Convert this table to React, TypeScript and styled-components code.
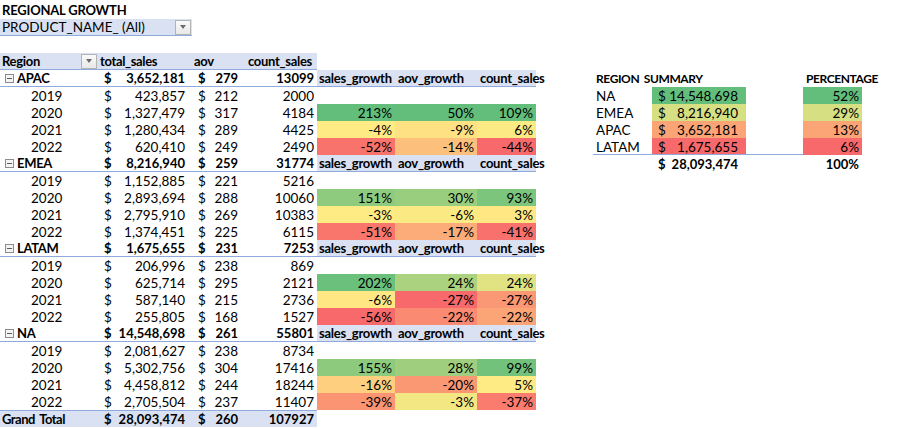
import React from "react";
import styled, { createGlobalStyle, css } from "styled-components";

const GlobalStyle = createGlobalStyle`
  html, body {
    margin: 0;
    padding: 0;
    background: #ffffff;
  }
  body {
    font-family: Lato, "Liberation Sans", sans-serif;
    font-size: 13.5px;
    color: #000000;
  }
`;

const BLUE_BG = "#D9E1F2";
const BLUE_LINE = "#8EA9DB";
const ROW = 17;

type Year = [number, string, number, number];
type Region = {
  name: string;
  total: string;
  aov: number;
  count: number;
  years: Year[];
  growth: number[][];
};

const regions: Region[] = [
  {
    name: "APAC",
    total: "3,652,181",
    aov: 279,
    count: 13099,
    years: [
      [2019, "423,857", 212, 2000],
      [2020, "1,327,479", 317, 4184],
      [2021, "1,280,434", 289, 4425],
      [2022, "620,410", 249, 2490],
    ],
    growth: [
      [213, 50, 109],
      [-4, -9, 6],
      [-52, -14, -44],
    ],
  },
  {
    name: "EMEA",
    total: "8,216,940",
    aov: 259,
    count: 31774,
    years: [
      [2019, "1,152,885", 221, 5216],
      [2020, "2,893,694", 288, 10060],
      [2021, "2,795,910", 269, 10383],
      [2022, "1,374,451", 225, 6115],
    ],
    growth: [
      [151, 30, 93],
      [-3, -6, 3],
      [-51, -17, -41],
    ],
  },
  {
    name: "LATAM",
    total: "1,675,655",
    aov: 231,
    count: 7253,
    years: [
      [2019, "206,996", 238, 869],
      [2020, "625,714", 295, 2121],
      [2021, "587,140", 215, 2736],
      [2022, "255,805", 168, 1527],
    ],
    growth: [
      [202, 24, 24],
      [-6, -27, -27],
      [-56, -22, -22],
    ],
  },
  {
    name: "NA",
    total: "14,548,698",
    aov: 261,
    count: 55801,
    years: [
      [2019, "2,081,627", 238, 8734],
      [2020, "5,302,756", 304, 17416],
      [2021, "4,458,812", 244, 18244],
      [2022, "2,705,504", 237, 11407],
    ],
    growth: [
      [155, 28, 99],
      [-16, -20, 5],
      [-39, -3, -37],
    ],
  },
];

const summary = [
  { name: "NA", value: "14,548,698", raw: 14548698, pct: "52%" },
  { name: "EMEA", value: "8,216,940", raw: 8216940, pct: "29%" },
  { name: "APAC", value: "3,652,181", raw: 3652181, pct: "13%" },
  { name: "LATAM", value: "1,675,655", raw: 1675655, pct: "6%" },
];

// excel style 3 colour scale: red -> yellow (median) -> green
const RED = [248, 105, 107];
const YELLOW = [255, 235, 132];
const GREEN = [99, 190, 123];

const median = (list: number[]) => {
  const s = [...list].sort((a, b) => a - b);
  const p = (s.length - 1) * 0.5;
  const lo = Math.floor(p);
  const hi = Math.ceil(p);
  return s[lo] + (s[hi] - s[lo]) * (p - lo);
};

const mix = (a: number[], b: number[], t: number) =>
  `rgb(${a.map((v, i) => Math.round(v + (b[i] - v) * t)).join(",")})`;

const scaleColor = (value: number, list: number[]) => {
  const min = Math.min(...list);
  const max = Math.max(...list);
  const mid = median(list);
  if (value <= mid) {
    return mix(RED, YELLOW, mid === min ? 1 : (value - min) / (mid - min));
  }
  return mix(YELLOW, GREEN, (value - mid) / (max - mid));
};

const growthColumns = [0, 1, 2].map((c) =>
  regions.flatMap((r) => r.growth.map((g) => g[c]))
);
const summaryValues = summary.map((s) => s.raw);

const Page = styled.div`
  display: flex;
  align-items: flex-start;
  padding-top: 2px;
  width: 903px;
  height: 428px;
  overflow: hidden;
`;

const Left = styled.div`
  display: flex;
  flex-direction: column;
  width: 536px;
`;

const Title = styled.div`
  height: ${ROW}px;
  line-height: ${ROW}px;
  padding-left: 2px;
  font-size: 13px;
  font-weight: 700;
  letter-spacing: -0.2px;
`;

const FilterBar = styled.div`
  display: flex;
  align-items: center;
  justify-content: space-between;
  width: 192px;
  height: ${ROW}px;
  box-sizing: border-box;
  padding: 0 1px 0 2px;
  background: ${BLUE_BG};
  border-bottom: 1px solid ${BLUE_LINE};
`;

const Spacer = styled.div`
  height: ${ROW}px;
`;

const DropButton = styled.span`
  display: flex;
  align-items: center;
  justify-content: center;
  width: 16px;
  height: 15px;
  box-sizing: border-box;
  border: 1px solid #b4b4b4;
  background: linear-gradient(#fafafa, #e8e8e8);

  &::after {
    content: "";
    border-left: 3.5px solid transparent;
    border-right: 3.5px solid transparent;
    border-top: 4px solid #6b6b6b;
  }
`;

const Row = styled.div`
  display: grid;
  grid-template-columns: 98px 94px 53px 72px 78px 82px 59px;
  height: ${ROW}px;
`;

const Cell = styled.div<{
  $bg?: string;
  $right?: boolean;
  $bold?: boolean;
  $size?: number;
  $squeeze?: number;
  $top?: boolean;
  $bottom?: boolean;
  $indent?: number;
}>`
  display: flex;
  align-items: center;
  justify-content: ${(p) => (p.$right ? "flex-end" : "flex-start")};
  box-sizing: border-box;
  height: ${ROW}px;
  padding: 0 3px 0 ${(p) => p.$indent ?? 2}px;
  white-space: nowrap;
  background: ${(p) => p.$bg ?? "transparent"};
  font-size: ${(p) => p.$size ?? (p.$bold ? 13 : 13.5)}px;
  font-weight: ${(p) => (p.$bold ? 700 : 400)};
  letter-spacing: ${(p) => (p.$squeeze ? -p.$squeeze : 0)}px;
  word-spacing: ${(p) => (p.$squeeze ? 2 : 0)}px;
  ${(p) =>
    p.$top &&
    css`
      border-top: 1px solid ${BLUE_LINE};
    `}
  ${(p) =>
    p.$bottom &&
    css`
      border-bottom: 1px solid ${BLUE_LINE};
    `}
`;

const HeadCell = styled(Cell)`
  justify-content: space-between;
  padding-right: 1px;
`;

const Money = styled(Cell)`
  justify-content: space-between;
  padding: 0 7px 0 6px;
`;

const Collapse = styled.span`
  position: relative;
  display: inline-block;
  width: 9px;
  height: 9px;
  box-sizing: border-box;
  margin: 0 3px 0 2px;
  border: 1px solid #8c8c8c;
  background: #f4f4f4;

  &::after {
    content: "";
    position: absolute;
    left: 1px;
    right: 1px;
    top: 3px;
    height: 1px;
    background: #5a5a5a;
  }
`;

const Summary = styled.div`
  display: grid;
  grid-template-columns: 59px 94px 57px 59px;
  grid-auto-rows: ${ROW}px;
  margin: ${ROW * 4}px 0 0 57px;
`;

const SumCell = styled(Cell)<{ $line?: boolean }>`
  padding-left: 3px;
  ${(p) =>
    p.$line &&
    css`
      box-shadow: inset 0 -1px 0 ${BLUE_LINE};
    `}
`;

const SumMoney = styled(Money)<{ $line?: boolean }>`
  padding: 0 8px 0 6px;
  ${(p) =>
    p.$line &&
    css`
      box-shadow: inset 0 -1px 0 ${BLUE_LINE};
    `}
`;

const Amount = ({ value }: { value: string }) => (
  <Money>
    <span>$</span>
    <span>{value}</span>
  </Money>
);

const App = () => {
  return (
    <>
      <GlobalStyle />
      <Page>
        <Left>
          <Title>REGIONAL GROWTH</Title>
          <FilterBar>
            <span>PRODUCT_NAME_ (All)</span>
            <DropButton />
          </FilterBar>
          <Spacer />

          <Row>
            <HeadCell $bg={BLUE_BG} $bold $squeeze={0.3} $bottom>
              <span>Region</span>
              <DropButton />
            </HeadCell>
            <Cell $bg={BLUE_BG} $bold $squeeze={0.35} $bottom>total_sales</Cell>
            <Cell $bg={BLUE_BG} $bold $squeeze={0.3} $bottom>aov</Cell>
            <Cell $bg={BLUE_BG} $bold $squeeze={0.3} $bottom $indent={3}>count_sales</Cell>
          </Row>

          {regions.map((r) => (
            <React.Fragment key={r.name}>
              <Row>
                <Cell $bold $squeeze={0.3} $bottom $indent={3}>
                  <Collapse />
                  {r.name}
                </Cell>
                <Money $bold $bottom>
                  <span>$</span>
                  <span>{r.total}</span>
                </Money>
                <Money $bold $bottom>
                  <span>$</span>
                  <span>{r.aov}</span>
                </Money>
                <Cell $bold $bottom $right>{r.count}</Cell>
                <Cell $bg={BLUE_BG} $bold $squeeze={0.25} $bottom>sales_growth</Cell>
                <Cell $bg={BLUE_BG} $bold $squeeze={0.25} $bottom $indent={3}>aov_growth</Cell>
                <Cell $bg={BLUE_BG} $bold $squeeze={0.25} $bottom $indent={3}>count_sales</Cell>
              </Row>
              {r.years.map(([year, total, aov, count], i) => (
                <Row key={year}>
                  <Cell $indent={31}>{year}</Cell>
                  <Amount value={total} />
                  <Amount value={String(aov)} />
                  <Cell $right>{count}</Cell>
                  {i > 0 &&
                    r.growth[i - 1].map((g, c) => (
                      <Cell key={c} $right $bg={scaleColor(g, growthColumns[c])}>
                        {g}%
                      </Cell>
                    ))}
                </Row>
              ))}
            </React.Fragment>
          ))}

          <Row>
            <Cell $bg={BLUE_BG} $bold $squeeze={0.5} $top>Grand Total</Cell>
            <Money $bg={BLUE_BG} $bold $top>
              <span>$</span>
              <span>28,093,474</span>
            </Money>
            <Money $bg={BLUE_BG} $bold $top>
              <span>$</span>
              <span>260</span>
            </Money>
            <Cell $bg={BLUE_BG} $bold $top $right>107927</Cell>
          </Row>
        </Left>

        <Summary>
          <SumCell $bold $size={12} $squeeze={0.4}>REGION SUMMARY</SumCell>
          <Cell />
          <Cell />
          <SumCell $bold $size={12} $squeeze={0.4}>PERCENTAGE</SumCell>
          {summary.map((s, i) => {
            const bg = scaleColor(s.raw, summaryValues);
            const last = i === summary.length - 1;
            return (
              <React.Fragment key={s.name}>
                <SumCell $line={last}>{s.name}</SumCell>
                <SumMoney $bg={bg} $line={last}>
                  <span>$</span>
                  <span>{s.value}</span>
                </SumMoney>
                <SumCell $line={last} />
                <Cell $right $bg={bg}>{s.pct}</Cell>
              </React.Fragment>
            );
          })}
          <Cell />
          <SumMoney $bold>
            <span>$</span>
            <span>28,093,474</span>
          </SumMoney>
          <Cell />
          <Cell $right $bold>100%</Cell>
        </Summary>
      </Page>
    </>
  );
};

export default App;
